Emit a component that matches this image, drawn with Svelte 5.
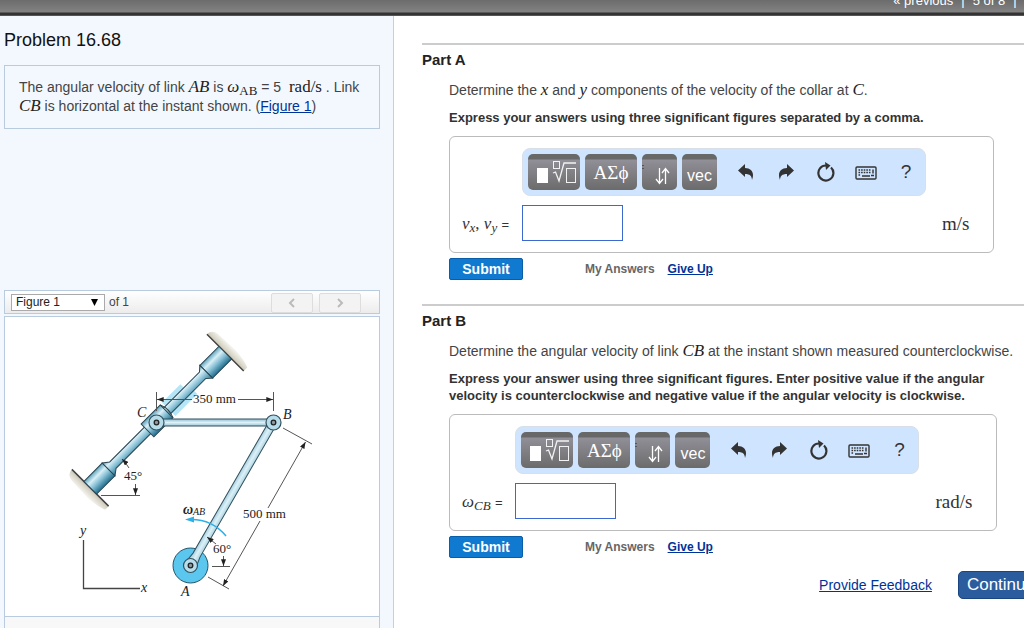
<script>
	let figure = $state('1');
	let answerA = $state('');
	let answerB = $state('');
</script>

<svelte:head>
	<title>Problem 16.68</title>
</svelte:head>

{#snippet toolbar()}
	<div class="toolbar" role="toolbar" aria-label="Math input">
		<button type="button" class="key wide" aria-label="Templates">
			<svg width="44" height="26" viewBox="0 0 44 26">
				<rect x="5" y="9" width="11" height="15" fill="#fff" />
				<g fill="none" stroke="#f2f2f2">
					<rect x="21.500" y="2.500" width="6" height="7" />
					<path d="M21 14l2.500-1 3.500 9 5-18H44" stroke-width="1.300" />
					<rect x="34.500" y="9.500" width="9" height="14" />
				</g>
			</svg>
		</button>
		<button type="button" class="key wide greek">ΑΣϕ</button>
		<button type="button" class="key" aria-label="Subscript and superscript">
			<svg width="35" height="26" viewBox="0 0 35 26">
				<path d="M0 6h2v1H0zM0 9h2v1H0z" fill="#555" />
				<path d="M17.500 9v15M14 20l3.500 4.500 3.500-4.500M23.500 25V10M20 14l3.500-4.500L27 14" fill="none" stroke="#fff" stroke-width="1.300" />
			</svg>
		</button>
		<button type="button" class="key vec">vec</button>
		<div class="tools">
			<button type="button" class="tool" aria-label="Undo">
				<svg width="20" height="20" viewBox="0 0 20 20">
					<path d="M2 8.500L9 2v4c5 0 8 3 8 7 0 2-.5 3.500-1 5-.2-4-2-6-7-6v3z" />
				</svg>
			</button>
			<button type="button" class="tool" aria-label="Redo">
				<svg width="20" height="20" viewBox="0 0 20 20">
					<path d="M18 8.500L11 2v4c-5 0-8 3-8 7 0 2 .5 3.500 1 5 .2-4 2-6 7-6v3z" />
				</svg>
			</button>
			<button type="button" class="tool" aria-label="Reset">
				<svg width="20" height="20" viewBox="0 0 20 20">
					<path d="M15 5.500a7.500 7.500 0 1 1-5-2" fill="none" stroke="#333" stroke-width="2.200" />
					<path d="M9 0l5.500 3.500L10 8z" />
				</svg>
			</button>
			<button type="button" class="tool" aria-label="Keyboard shortcuts">
				<svg width="22" height="20" viewBox="0 0 22 20">
					<rect x="1" y="5" width="20" height="12" rx="1" fill="none" stroke="#333" stroke-width="1.400" />
					<path d="M3.500 8h13M3.500 10.500h13M3.500 13h2" fill="none" stroke="#333" stroke-width="1.400" stroke-dasharray="1.600 1" />
					<path d="M7 14h8M18 7.500v4M16 13.500h3" fill="none" stroke="#333" stroke-width="1.400" />
				</svg>
			</button>
			<button type="button" class="tool help" aria-label="Help">?</button>
		</div>
	</div>
{/snippet}

{#snippet actions()}
	<div class="actions">
		<button type="submit" class="submit">Submit</button>
		<span class="my-answers">My Answers</span>
		<a class="give-up" href="#give-up">Give Up</a>
	</div>
{/snippet}

<div class="page">
	<header class="top-bar">
		<a href="#previous">« previous</a>
		<span class="bar">|</span>
		<span>5 of 8</span>
		<span class="bar">|</span>
		<a href="#next">next »</a>
	</header>

	<div class="columns">
		<aside class="sidebar">
			<h1>Problem 16.68</h1>
			<p class="statement">
				The angular velocity of link <i class="math">AB</i> is <span class="math"><i>ω</i><sub>AB</sub></span> = 5
				&nbsp;<span class="math">rad/s</span> . Link <i class="math">CB</i> is horizontal at the instant shown.
				(<a href="#figure">Figure 1</a>)
			</p>

			<div class="figure-nav">
				<div class="picker">
					<select id="figure-select" bind:value={figure} aria-label="Figure">
						<option value="1">Figure 1</option>
					</select>
					<svg width="7" height="7" viewBox="0 0 7 7"><path d="M0 0h7L3.500 7z" /></svg>
				</div>
				<label for="figure-select">of 1</label>
				<div class="steps">
					<button type="button" aria-label="Previous figure">
						<svg width="8" height="10" viewBox="0 0 8 10"><path d="M6 1L2 5l4 4" /></svg>
					</button>
					<button type="button" aria-label="Next figure">
						<svg width="8" height="10" viewBox="0 0 8 10"><path d="M2 1l4 4-4 4" /></svg>
					</button>
				</div>
			</div>

			<div class="figure" id="figure">
				<svg viewBox="5 317 374 299" role="img" aria-label="Linkage ABC with collar C on a fixed rod">
					<defs>
						<linearGradient id="steel" x1="0" y1="0" x2="0" y2="1">
							<stop offset="0" stop-color="#5fa3bc" />
							<stop offset="0.3" stop-color="#d8eff7" />
							<stop offset="0.6" stop-color="#85bfd4" />
							<stop offset="1" stop-color="#1f6c8c" />
						</linearGradient>
						<linearGradient id="link" x1="0" y1="0" x2="0" y2="1">
							<stop offset="0" stop-color="#8fbfd2" />
							<stop offset="0.5" stop-color="#dcf1f8" />
							<stop offset="1" stop-color="#94c6d8" />
						</linearGradient>
						<linearGradient id="wall-up" x1="0" y1="0" x2="1" y2="0">
							<stop offset="0" stop-color="#cbc7b6" />
							<stop offset="1" stop-color="#f6f5f0" />
						</linearGradient>
						<linearGradient id="wall-down" x1="1" y1="0" x2="0" y2="0">
							<stop offset="0" stop-color="#cbc7b6" />
							<stop offset="1" stop-color="#f6f5f0" />
						</linearGradient>
						<marker id="tip" viewBox="0 0 8 6" refX="8" refY="3" markerWidth="7" markerHeight="5" markerUnits="userSpaceOnUse" orient="auto-start-reverse">
							<path d="M0 0l8 3-8 3z" fill="#222" />
						</marker>
					</defs>

					<!-- inclined rod, drawn along its own axis with C at the origin -->
					<g transform="translate(156 422) rotate(-45)" stroke="#2c4450" stroke-width="1">
						<path d="M98-26q7 0 8 8l1 24q-1 14-4 20h-5z" fill="url(#wall-up)" stroke="none" />
						<path d="M-93-26q-7 0-8 8l-1 24q1 14 4 20h5z" fill="url(#wall-down)" stroke="none" />
						<path d="M98-26v52M-93-26v52" stroke="#444" stroke-width="1.500" />
						<rect x="71" y="-9" width="27" height="18" fill="url(#steel)" />
						<rect x="-93" y="-9" width="26" height="18" fill="url(#steel)" />
						<path d="M18-7h26M18 7h31" stroke="#b4e6f8" stroke-width="5" />
						<path d="M-67-9l6 4.500H66L71-9V9L66 4.500H-61L-67 9z" fill="url(#steel)" />
						<rect x="-12" y="-9" width="27" height="18" fill="url(#steel)" />
						<path d="M15-9q4 9 0 18" fill="none" />
					</g>

					<rect x="160" y="419" width="110" height="7" fill="url(#link)" stroke="#33505d" />
					<circle cx="190.500" cy="565.500" r="17.500" fill="#5bc7ee" stroke="#27556a" />
					<g transform="translate(190.500 565.500) rotate(-60)">
						<path d="M0-6L12-4H160V4H12L0 6z" fill="url(#link)" stroke="#33505d" />
					</g>
					<g fill="#b7dcea" stroke="#33505d" stroke-width="1.200">
						<circle cx="156.500" cy="422.500" r="7.500" />
						<circle cx="273.500" cy="422.500" r="7.500" />
						<circle cx="190.500" cy="565.500" r="7" />
					</g>
					<g fill="#8b9aa1" stroke="#222" stroke-width="1.300">
						<circle cx="156.500" cy="422.500" r="2.300" />
						<circle cx="273.500" cy="422.500" r="2.300" />
						<circle cx="190.500" cy="565.500" r="2.300" />
					</g>

					<!-- dimension lines and axes -->
					<g fill="none" stroke="#555">
						<path d="M156.500 392v19M273.500 392v19M283 428l29 16M208 577l21 12" />
						<path d="M157 399.500h35" marker-start="url(#tip)" />
						<path d="M238 399.500h35" marker-end="url(#tip)" />
						<path d="M305.500 442L268 508" marker-start="url(#tip)" />
						<path d="M260 521l-37 65" marker-end="url(#tip)" />
						<path d="M101 495.500h39M212 566.500h18" />
						<path d="M135.500 484v11" marker-end="url(#tip)" />
						<path d="M223.500 556v10" marker-end="url(#tip)" />
						<path d="M129 468q-3-5-7-9" marker-end="url(#tip)" />
						<path d="M216 544l-9-7" marker-end="url(#tip)" />
						<path d="M83.500 540v48.500H140" stroke="#444" stroke-width="1.300" />
					</g>
					<path d="M226 536q-14-17-36-16.500" fill="none" stroke="#2bb0e8" stroke-width="1.500" />
					<path d="M185 519.500l9-3v6z" fill="#2bb0e8" />

					<g class="labels">
						<text x="193" y="403">350 mm</text>
						<text x="243" y="518">500 mm</text>
						<text x="124" y="480">45°</text>
						<text x="213" y="553">60°</text>
						<g class="points">
							<text x="137" y="417">C</text>
							<text x="283" y="419">B</text>
							<text x="181" y="596">A</text>
							<text x="80" y="535">y</text>
							<text x="141" y="592">x</text>
							<text x="183" y="514" class="omega">ω</text>
							<text x="193" y="515" class="small">AB</text>
						</g>
					</g>
				</svg>
			</div>
			<div class="figure-foot"></div>
		</aside>

		<main>
			<section>
				<h2>Part A</h2>
				<form class="body" onsubmit={(e) => e.preventDefault()}>
					<p>
						Determine the <i class="math">x</i> and <i class="math">y</i> components of the velocity of the collar at
						<i class="math">C</i>.
					</p>
					<p class="instructions">Express your answers using three significant figures separated by a comma.</p>
					<div class="answer">
						{@render toolbar()}
						<label for="answer-a"><i>v<sub>x</sub></i>, <i>v<sub>y</sub></i> <span class="eq">=</span></label>
						<input id="answer-a" type="text" bind:value={answerA} />
						<span class="unit">m/s</span>
					</div>
					{@render actions()}
				</form>
			</section>

			<section>
				<h2>Part B</h2>
				<form class="body" onsubmit={(e) => e.preventDefault()}>
					<p>
						Determine the angular velocity of link <i class="math">CB</i> at the instant shown measured
						counterclockwise.
					</p>
					<p class="instructions">
						Express your answer using three significant figures. Enter positive value if the angular velocity is
						counterclockwise and negative value if the angular velocity is clockwise.
					</p>
					<div class="answer">
						{@render toolbar()}
						<label for="answer-b"><i>ω<sub>CB</sub></i> <span class="eq">=</span></label>
						<input id="answer-b" type="text" bind:value={answerB} />
						<span class="unit">rad/s</span>
					</div>
					{@render actions()}
				</form>
			</section>

			<footer>
				<a href="#feedback">Provide Feedback</a>
				<button type="button" class="continue">Continue</button>
			</footer>
		</main>
	</div>
</div>

<style>
	:global(body) {
		overflow: hidden;
		background: #fff;
	}
	.page {
		display: flex;
		flex-direction: column;
		min-width: 1064px;
		min-height: 100vh;
		font: 14px/19px 'Liberation Sans', Arial, sans-serif;
		color: #444;
	}
	h1,
	h2,
	p {
		margin: 0;
	}
	button,
	input,
	select {
		box-sizing: border-box;
		margin: 0;
		font-family: inherit;
	}
	a {
		color: #003399;
	}
	.top-bar {
		box-sizing: border-box;
		height: 16px;
		padding: 0 4px 8px 0;
		overflow: hidden;
		display: flex;
		justify-content: flex-end;
		align-items: flex-end;
		gap: 8px;
		font-size: 13px;
		line-height: 14px;
		color: #fff;
		background: linear-gradient(#6c6c6c, #828282 12px, #333 13px, #333 15px, #777 16px);
	}
	.top-bar a {
		color: #fff;
		text-decoration: none;
	}
	.columns {
		flex: 1;
		display: grid;
		grid-template-columns: 394px minmax(0, 1fr);
	}
	.sidebar {
		display: flex;
		flex-direction: column;
		padding: 12px 13px 0 4px;
		background: #f3f8ff;
		border-right: 1px solid #c3d1dd;
	}
	h1 {
		font-size: 18px;
		line-height: 24px;
		font-weight: normal;
		color: #111;
	}
	.math {
		font-family: 'Liberation Serif', 'Times New Roman', serif;
		font-size: 17px;
		line-height: 16px;
		color: #222;
	}
	sub {
		font-size: 13px;
		line-height: 0;
		vertical-align: -3px;
	}
	.statement {
		margin-top: 13px;
		padding: 12px 14px;
		border: 1px solid #b9cbdf;
	}
	.figure-nav {
		display: flex;
		align-items: center;
		gap: 4px;
		box-sizing: border-box;
		height: 24px;
		margin-top: 161px;
		padding: 0 18px 0 6px;
		border: 1px solid #b9cbdf;
		background: linear-gradient(#fff, #ececec);
		font-size: 12px;
		line-height: 18px;
	}
	.picker {
		display: grid;
		align-items: center;
	}
	.picker > * {
		grid-area: 1 / 1;
	}
	.picker svg {
		justify-self: end;
		margin-right: 7px;
		pointer-events: none;
	}
	select {
		appearance: none;
		width: 94px;
		height: 17px;
		padding: 0 4px;
		border: 1px solid #aaa;
		background: #fff;
		font-size: 12px;
		line-height: 15px;
		color: #222;
	}
	.steps {
		align-self: end;
		display: flex;
		gap: 6px;
		margin-left: auto;
	}
	.steps button {
		display: flex;
		align-items: center;
		justify-content: center;
		width: 42px;
		height: 20px;
		padding: 0;
		border: 1px solid #ddd;
		border-radius: 2px;
		background: #f3f3f3;
	}
	.steps path {
		fill: none;
		stroke: #bbb;
		stroke-width: 2;
	}
	.figure {
		margin-top: 2px;
		border: 1px solid #b9cbdf;
		background: #fff;
	}
	.figure svg {
		display: block;
		width: 100%;
	}
	.labels {
		font: 13px 'Liberation Serif', 'Times New Roman', serif;
		fill: #222;
	}
	.points {
		font-size: 14px;
		font-style: italic;
	}
	.omega {
		font-weight: bold;
	}
	.small {
		font-size: 10px;
	}
	.figure-foot {
		flex: 1;
		border: solid #b9cbdf;
		border-width: 0 1px;
		background: #f8f8f8;
	}
	main {
		padding: 27px 0 0 28px;
	}
	section {
		padding: 6px 24px 24px 0;
		border-top: 2px solid #ccc;
	}
	h2 {
		font-size: 15px;
		line-height: 18px;
		color: #222;
	}
	.body {
		padding: 12px 0 0 27px;
	}
	.body .instructions {
		max-width: 575px;
		margin: 9px 0 10px;
		font-size: 13px;
		font-weight: bold;
		line-height: 17px;
		color: #333;
	}
	.answer {
		display: grid;
		grid-template-columns: auto auto auto;
		gap: 9px 13px;
		align-items: center;
		width: fit-content;
		padding: 11px 24px 11px 12px;
		border: 1px solid #bbb;
		border-radius: 6px;
	}
	.toolbar {
		grid-column: 2;
		display: flex;
		align-items: center;
		gap: 5px;
		box-sizing: border-box;
		width: 404px;
		height: 48px;
		padding: 0 5px;
		border: 1px solid #d9dfe6;
		border-radius: 8px;
		background: #cfe5ff;
	}
	.key {
		display: flex;
		align-items: flex-end;
		justify-content: center;
		width: 35px;
		height: 36px;
		padding: 0 0 5px;
		border: 0;
		border-radius: 5px;
		background: linear-gradient(#686868 5px, #918f97 6px, #6b6b6b);
		color: #fff;
	}
	.wide {
		width: 52px;
	}
	.greek {
		font: 19px/24px 'Liberation Serif', 'Times New Roman', serif;
	}
	.vec {
		font-size: 16px;
		line-height: 18px;
	}
	.tools {
		display: flex;
		gap: 12px;
		margin-left: 10px;
	}
	.tool {
		display: flex;
		align-items: center;
		justify-content: center;
		width: 28px;
		height: 28px;
		padding: 0;
		border: 0;
		background: none;
		color: #333;
	}
	.tool svg {
		fill: #333;
	}
	.help {
		font-size: 19px;
	}
	.answer label {
		grid-column: 1;
		font-family: 'Liberation Serif', 'Times New Roman', serif;
		font-size: 17px;
		color: #333;
	}
	.eq {
		font: 13px 'Liberation Sans', Arial, sans-serif;
	}
	.answer input {
		grid-column: 2;
		width: 101px;
		height: 36px;
		padding: 0 6px;
		border: 1px solid #3c68d0;
		background: #fff;
		font-size: 16px;
	}
	.unit {
		grid-column: 3;
		margin-left: 3px;
		font-family: 'Liberation Serif', 'Times New Roman', serif;
		font-size: 19px;
		color: #333;
	}
	.actions {
		display: flex;
		align-items: center;
		margin-top: 5px;
		font-size: 12px;
		font-weight: bold;
	}
	.submit {
		width: 74px;
		height: 22px;
		padding: 0;
		border: 1px solid #0a5ea8;
		border-radius: 2px;
		background: #0f7ad0;
		color: #fff;
		font-size: 14px;
		font-weight: bold;
	}
	.my-answers {
		margin: 0 13px 0 62px;
		color: #666;
	}
	footer {
		display: flex;
		justify-content: flex-end;
		align-items: center;
		gap: 26px;
		padding-right: 20px;
		margin-top: -11px;
	}
	.continue {
		height: 28px;
		padding: 0 8px;
		border: 1px solid #1b4580;
		border-radius: 5px;
		background: #2b5c9e;
		color: #fff;
		font-size: 17px;
	}
</style>
